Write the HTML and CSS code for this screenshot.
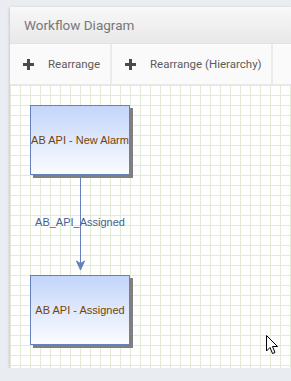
FILE: index.html
```html
<!DOCTYPE html>
<html lang="en">
  <head>
    <meta charset="UTF-8" />
    <meta name="viewport" content="width=device-width, initial-scale=1.0" />
    <title>Workflow Diagram</title>
    <link rel="stylesheet" href="styles.css">
  </head>
  <body>
    <div class="panel">
      <div class="panel-header">Workflow Diagram</div>

      <div class="toolbar">
        <button class="tool-btn"><span class="plus"></span>Rearrange</button>
        <button class="tool-btn"><span class="plus"></span>Rearrange (Hierarchy)</button>
        <button class="tool-btn tool-rest"></button>
      </div>

      <div class="canvas">
        <svg class="edges" width="200" height="200">
          <line x1="70.5" y1="90" x2="70.5" y2="180" stroke="#6482b9" stroke-width="1" />
          <path d="M70.5 185 L66.5 176 L70.5 178.5 L74.5 176 Z" fill="#6482b9" stroke="#6482b9" stroke-width="1" />
        </svg>
        <div class="edge-label">AB_API_Assigned</div>

        <div class="node node-top">AB API - New Alarm</div>
        <div class="node node-bottom">AB API - Assigned</div>

        <svg class="cursor" width="14" height="21" viewBox="0 0 14 21">
          <path d="M0.5 0.5 L0.5 16 L4 12.5 L6.5 18.5 L9 17.5 L6.5 11.5 L11.5 11.5 Z" fill="#fff" stroke="#000" stroke-width="1" stroke-linejoin="round" />
        </svg>
      </div>
    </div>
  </body>
</html>
```

FILE: styles.css
```css
/* General Styles */
body {
  margin: 0;
  padding: 0;
  background: #e9ecf0;
  font-family: Roboto, Arial, sans-serif;
  overflow: hidden;
}
.panel {
  margin: 7px 0 0 10px;
  background: #fff;
  box-shadow: 0 1px 3px rgba(0, 0, 0, 0.25);
}
.panel-header {
  height: 36px;
  line-height: 36px;
  padding-left: 14px;
  font-size: 13.5px;
  color: #777;
  background: linear-gradient(#f8f8f8, #e8e8e8);
  border-bottom: 1px solid #e2e2e2;
}
.toolbar {
  display: flex;
  gap: 2px;
  height: 40px;
  background: #ebebeb;
  border-bottom: 1px solid #e8e8e8;
}
.tool-btn {
  display: flex;
  align-items: center;
  padding: 0 0 0 13px;
  border: none;
  background: #fafafa;
  font-family: inherit;
  font-size: 11.5px;
  color: #5c5c5c;
  cursor: pointer;
}
.tool-btn:first-child {
  width: 100px;
}
.tool-btn:nth-child(2) {
  width: 159px;
}
.tool-rest {
  flex: 1;
}
.plus {
  position: relative;
  width: 11px;
  height: 11px;
  margin-right: 14px;
}
.plus::before,
.plus::after {
  content: "";
  position: absolute;
  background: #4a4a4a;
}
.plus::before {
  left: 4px;
  top: 0;
  width: 3px;
  height: 11px;
}
.plus::after {
  left: 0;
  top: 4px;
  width: 11px;
  height: 3px;
}
.canvas {
  position: relative;
  height: 283px;
  background-color: #fff;
  background-image:
    linear-gradient(to right, #e3ebd7 1px, transparent 1px),
    linear-gradient(to bottom, #e3ebd7 1px, transparent 1px);
  background-size: 10px 10px;
}
.edges {
  position: absolute;
  left: 0;
  top: 0;
}
.edge-label {
  position: absolute;
  left: 10px;
  top: 131px;
  width: 120px;
  text-align: center;
  font-family: "Liberation Sans", Arial, sans-serif;
  font-size: 11px;
  color: #4a5d94;
}
.node {
  position: absolute;
  left: 20px;
  width: 98px;
  height: 68px;
  display: flex;
  align-items: center;
  justify-content: center;
  border: 1px solid #6482b9;
  background: linear-gradient(#c3d5fb, #fbfcff);
  box-shadow: 3px 3px 0 #7f7f7f;
  font-family: "Liberation Sans", Arial, sans-serif;
  font-size: 11px;
  color: #774400;
  white-space: nowrap;
}
.node-top {
  top: 20px;
}
.node-bottom {
  top: 190px;
}
.cursor {
  position: absolute;
  left: 256px;
  top: 250px;
}
```
